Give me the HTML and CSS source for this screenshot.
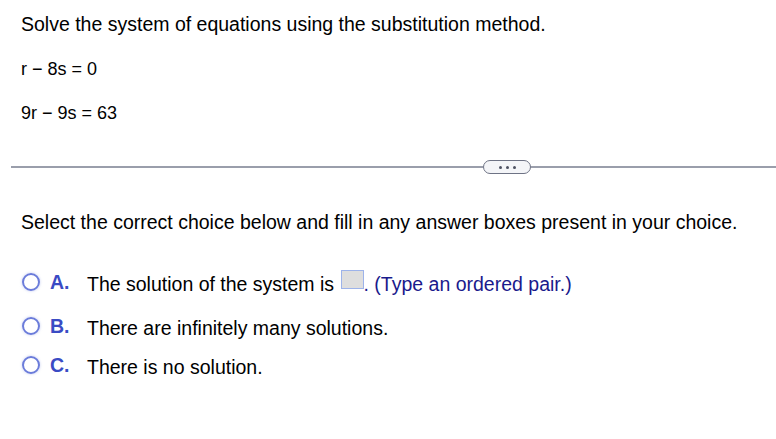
FILE: index.html
```html
<!DOCTYPE html>
<html>
<head>
<meta charset="utf-8">
<link rel="stylesheet" href="styles.css">
</head>
<body>
<div class="page">
  <div class="question">
    <p class="prompt">Solve the system of equations using the substitution method.</p>
    <p class="eq eq1">r − 8s = 0</p>
    <p class="eq eq2">9r − 9s = 63</p>
  </div>
  <div class="divider">
    <div class="rule rule-left"></div>
    <div class="pill"><span class="dot"></span><span class="dot"></span><span class="dot"></span></div>
    <div class="rule rule-right"></div>
  </div>
  <div class="answer">
    <p class="instr">Select the correct choice below and fill in any answer boxes present in your choice.</p>
    <div class="options">
      <div class="option opt-a">
        <span class="radio"></span>
        <span class="letter">A.</span>
        <span class="text">The solution of the system is <span class="box"></span><span class="hint">. (Type an ordered pair.)</span></span>
      </div>
      <div class="option opt-b">
        <span class="radio"></span>
        <span class="letter">B.</span>
        <span class="text">There are infinitely many solutions.</span>
      </div>
      <div class="option opt-c">
        <span class="radio"></span>
        <span class="letter">C.</span>
        <span class="text">There is no solution.</span>
      </div>
    </div>
  </div>
</div>
</body>
</html>
```
FILE: styles.css
```css
html, body {
  margin: 0;
  padding: 0;
  background: #ffffff;
}
body {
  font-family: "Liberation Sans", Arial, sans-serif;
  color: #000000;
  width: 776px;
  height: 439px;
  overflow: hidden;
}
p { margin: 0; }
.question {
  padding: 12px 0 0 21px;
}
.prompt {
  font-size: 19.5px;
  line-height: 24px;
}
.eq {
  font-size: 18px;
  line-height: 24px;
}
.eq1 { margin-top: 21px; }
.eq2 { margin-top: 20px; }
.divider {
  display: flex;
  align-items: center;
  margin-top: 35px;
  margin-left: 11px;
  height: 14px;
}
.rule {
  height: 2px;
  background: #9a9eab;
}
.rule-left { width: 472px; }
.rule-right { flex: 1; }
.pill {
  box-sizing: border-box;
  width: 48px;
  height: 14px;
  border: 1px solid #6e7385;
  border-radius: 7px;
  background: #f4f5f8;
  display: flex;
  align-items: center;
  justify-content: center;
  gap: 4px;
}
.dot {
  width: 3px;
  height: 3px;
  border-radius: 50%;
  background: #4d5262;
}
.answer {
  padding-left: 21px;
}
.instr {
  font-size: 19.5px;
  line-height: 24px;
  margin-top: 36px;
}
.options {
  margin-top: 33px;
  display: flex;
  flex-direction: column;
}
.option {
  display: flex;
  align-items: center;
  height: 30px;
}
.opt-b { margin-top: 14px; }
.opt-c { margin-top: 9px; }
.radio {
  box-sizing: border-box;
  width: 18px;
  height: 18px;
  border-radius: 50%;
  border: 2px solid #6b7cda;
  box-shadow: 0 0 2px 1px rgba(175, 185, 235, 0.35);
  margin-left: 1px;
  flex: none;
}
.letter {
  font-size: 19.5px;
  line-height: 22px;
  font-weight: bold;
  color: #3a4bc4;
  margin-left: 10px;
  width: 37px;
  flex: none;
}
.text {
  display: flex;
  align-items: flex-start;
  font-size: 19.5px;
  line-height: 22px;
  margin-top: 4px;
  white-space: pre;
}
.box {
  display: inline-block;
  box-sizing: border-box;
  width: 23px;
  height: 19px;
  background: #dedede;
  border: 1px solid #9db3ea;
  margin-top: -3px;
  margin-left: 1px;
}
.hint {
  color: #1a1a8c;
}
```
